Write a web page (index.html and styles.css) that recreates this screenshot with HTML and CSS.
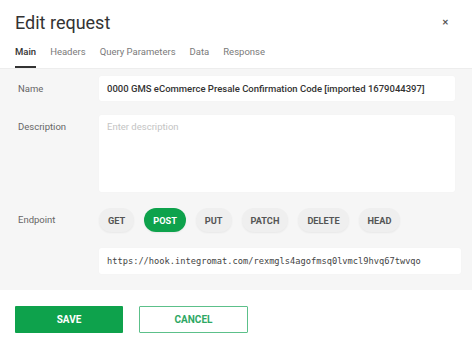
FILE: index.html
```html
<!DOCTYPE html>
<html>
<head>
<meta charset="utf-8">
<link rel="stylesheet" href="styles.css">
</head>
<body>
<div class="dialog">
  <div class="header">
    <h1 class="title">Edit request</h1>
    <span class="close">&#x2715;</span>
  </div>
  <div class="tabs">
    <span class="tab active">Main</span>
    <span class="tab">Headers</span>
    <span class="tab">Query Parameters</span>
    <span class="tab">Data</span>
    <span class="tab">Response</span>
  </div>
  <div class="panel">
    <div class="row">
      <div class="label label-center">Name</div>
      <div class="field name-field">0000 GMS eCommerce Presale Confirmation Code [imported 1679044397]</div>
    </div>
    <div class="row">
      <div class="label label-top">Description</div>
      <div class="field desc-field"><span class="placeholder">Enter description</span></div>
    </div>
    <div class="row">
      <div class="label label-center">Endpoint</div>
      <div class="methods">
        <span class="method">GET</span>
        <span class="method selected">POST</span>
        <span class="method">PUT</span>
        <span class="method">PATCH</span>
        <span class="method">DELETE</span>
        <span class="method">HEAD</span>
      </div>
    </div>
    <div class="row">
      <div class="label"></div>
      <div class="field url-field">https://hook.integromat.com/rexmgls4agofmsq0lvmcl9hvq67twvqo</div>
    </div>
  </div>
  <div class="footer">
    <button class="btn btn-save">SAVE</button>
    <button class="btn btn-cancel">CANCEL</button>
  </div>
</div>
</body>
</html>
```

FILE: styles.css
```css
html, body {
  margin: 0;
  padding: 0;
  background: #ffffff;
}
body {
  font-family: Roboto, "Liberation Sans", sans-serif;
  color: #333;
}
.dialog {
  width: 472px;
}
.header {
  display: flex;
  align-items: center;
  justify-content: space-between;
  padding: 9px 23px 0 15px;
  height: 27px;
}
.title {
  margin: 0;
  font-size: 18px;
  font-weight: 400;
  color: #333;
}
.close {
  font-size: 8px;
  color: #555;
  font-weight: 700;
}
.tabs {
  display: flex;
  gap: 14px;
  padding: 6px 15px 0 15px;
}
.tab {
  font-size: 9.5px;
  line-height: 12px;
  color: #7a7a7a;
  padding: 4px 0 8px 0;
  border-bottom: 2px solid transparent;
}
.tab.active {
  color: #333;
  font-weight: 500;
  border-bottom-color: #333;
}
.panel {
  background: #f6f6f6;
  border-top: 1px solid #ededed;
  padding: 7px 0 16px 18px;
  display: flex;
  flex-direction: column;
  gap: 14px;
}
.row {
  display: flex;
}
.label {
  width: 81px;
  flex: none;
  font-size: 9.5px;
  color: #666;
}
.label-center {
  align-self: center;
}
.label-top {
  padding-top: 6px;
}
.field {
  background: #fff;
  border-radius: 2px;
  box-shadow: 0 0 1px rgba(0,0,0,0.06);
  box-sizing: border-box;
  padding: 0 8px;
  display: flex;
  align-items: center;
}
.name-field {
  width: 356px;
  height: 25px;
  font-size: 9.5px;
  font-weight: 500;
  color: #333;
  white-space: nowrap;
}
.desc-field {
  width: 356px;
  height: 77px;
  align-items: flex-start;
  padding-top: 6px;
}
.placeholder {
  font-size: 9.5px;
  color: #c4c4c4;
}
.methods {
  display: flex;
  gap: 10px;
  margin-top: 2px;
}
.method {
  height: 24px;
  padding: 0 9px;
  border-radius: 12px;
  background: #efefef;
  box-shadow: 0 1px 2px rgba(0,0,0,0.06);
  font-size: 9.2px;
  font-weight: 700;
  color: #555;
  display: flex;
  align-items: center;
}
.method.selected {
  background: #0ea24c;
  color: #fff;
}
.url-field {
  width: 362px;
  height: 26px;
  margin-top: 2px;
  font-family: "DejaVu Sans Mono", "Liberation Mono", monospace;
  font-size: 8.7px;
  color: #444;
  white-space: nowrap;
}
.footer {
  display: flex;
  gap: 16px;
  padding: 16px 15px 0 15px;
}
.btn {
  width: 108px;
  height: 27px;
  font-family: Roboto, "Liberation Sans", sans-serif;
  font-size: 10px;
  font-weight: 700;
  border-radius: 1px;
  box-sizing: border-box;
  margin: 0;
  padding: 0;
}
.btn-save {
  background: #0ea24c;
  color: #fff;
  border: none;
}
.btn-cancel {
  width: 109px;
  background: #fff;
  color: #2ea864;
  border: 1.5px solid #5cc08a;
}
```
